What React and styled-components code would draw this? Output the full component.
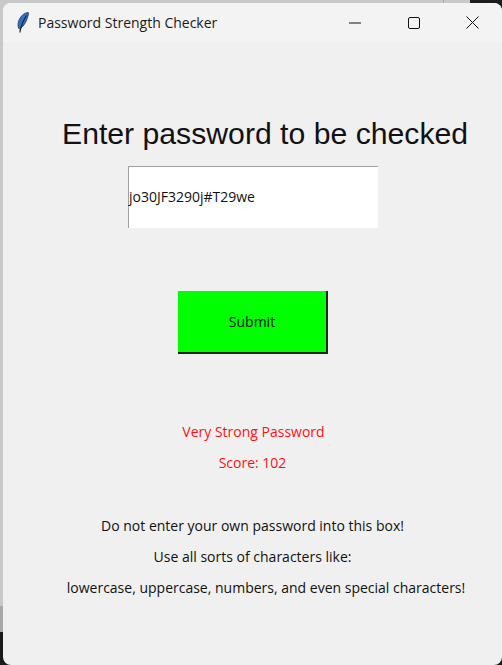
import React from "react";
import styled, { createGlobalStyle } from "styled-components";

const Global = createGlobalStyle`
  html, body { margin: 0; padding: 0; width: 502px; height: 665px; overflow: hidden; background: #1c1c1c; }
  * { box-sizing: border-box; }
`;

const Desktop = styled.div`
  width: 502px;
  height: 665px;
  padding: 3px 0 0 3px;
  background:
    linear-gradient(#1c1c1c, #1c1c1c) right top / 32px 12px no-repeat,
    linear-gradient(#a9a9a9, #a9a9a9) 443px 0 / 1px 3px no-repeat,
    linear-gradient(to bottom, #c9c9c9 0, #c9c9c9 606px, #a8a8a8 606px, #a8a8a8 632px, #1a1a1a 632px);
`;

const Window = styled.div`
  width: 499px;
  height: 662px;
  background: #f0f0f0;
  border-radius: 8px;
  font-family: "Open Sans", "Noto Sans", sans-serif;
  overflow: hidden;
`;

const TitleBar = styled.header`
  height: 39px;
  display: flex;
  align-items: center;
  background: #f3f3f3;
  padding-left: 14px;
`;

const TitleText = styled.span`
  margin-left: 9px;
  font-size: 14px;
  color: #1a1a1a;
`;

const WindowControls = styled.div`
  margin-left: auto;
  display: flex;
`;

const ControlButton = styled.div`
  width: 59px;
  height: 39px;
  display: flex;
  align-items: center;
  justify-content: center;
`;

const Content = styled.main`
  display: flex;
  flex-direction: column;
  align-items: flex-start;
`;

const Heading = styled.h1`
  margin: 72px 0 0 59px;
  font: 400 30.2px/40px "Liberation Sans", Arial, sans-serif;
  color: #111;
  white-space: nowrap;
`;

const PasswordInput = styled.div`
  margin: 12px 0 0 125px;
  width: 250px;
  height: 62px;
  padding-bottom: 2px;
  background: #fff;
  border-top: 1px solid #a0a0a0;
  border-left: 1px solid #a0a0a0;
  display: flex;
  align-items: center;
  font-size: 14px;
  color: #111;
`;

const SubmitButton = styled.div`
  margin: 63px 0 0 175px;
  width: 150px;
  height: 63px;
  background: #00ff00;
  border-right: 2px solid #222;
  border-bottom: 2px solid #222;
  display: flex;
  align-items: center;
  justify-content: center;
  font-size: 14px;
  color: #0a0a0a;
`;

const Message = styled.p`
  margin: ${(p) => p.$top}px 0 0;
  width: 499px;
  padding-left: ${(p) => p.$shift || 0}px;
  text-align: center;
  font-size: 14px;
  line-height: 20px;
  color: ${(p) => p.$color || "#111"};
  white-space: nowrap;
`;

const Feather = () => (
  <svg width="12" height="21" viewBox="0 0 12 21">
    <path d="M11 0.5C8 0.8 4.5 3 2.5 7 1 10 .6 13 1.5 16c.3 1 1 1 1.8.5C7 14 10 9 11.5 2c.1-.8 0-1.5-.5-1.5z" fill="#2f72cc" stroke="#2a3346" strokeWidth="0.8" />
    <path d="M9.5 3.5C6.5 8 4.2 13 2.8 20.5" fill="none" stroke="#20262f" strokeWidth="1.3" />
  </svg>
);

export default function App() {
  return (
    <Desktop>
      <Global />
      <Window>
        <TitleBar>
          <Feather />
          <TitleText>Password Strength Checker</TitleText>
          <WindowControls>
            <ControlButton>
              <svg width="12" height="12" viewBox="0 0 12 12"><path d="M0 6h12" stroke="#111" strokeWidth="1" /></svg>
            </ControlButton>
            <ControlButton>
              <svg width="12" height="12" viewBox="0 0 12 12"><rect x="0.5" y="0.5" width="11" height="11" rx="1.5" fill="none" stroke="#111" strokeWidth="1" /></svg>
            </ControlButton>
            <ControlButton>
              <svg width="13" height="13" viewBox="0 0 13 13"><path d="M0.5 0.5l12 12M12.5 0.5l-12 12" stroke="#111" strokeWidth="1" /></svg>
            </ControlButton>
          </WindowControls>
        </TitleBar>
        <Content>
          <Heading>Enter password to be checked</Heading>
          <PasswordInput>jo30JF3290j#T29we</PasswordInput>
          <SubmitButton>Submit</SubmitButton>
          <Message $top={68} $shift={2} $color="#ff1010">Very Strong Password</Message>
          <Message $top={11} $color="#ff1010">Score: 102</Message>
          <Message $top={43}>Do not enter your own password into this box!</Message>
          <Message $top={11}>Use all sorts of characters like:</Message>
          <Message $top={11} $shift={27}>lowercase, uppercase, numbers, and even special characters!</Message>
        </Content>
      </Window>
    </Desktop>
  );
}
